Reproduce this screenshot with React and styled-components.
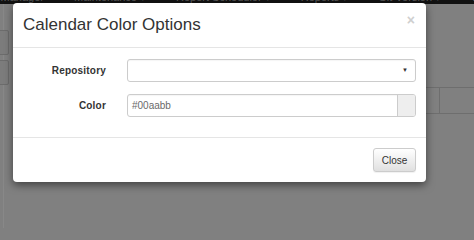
import React from 'react'
import styled, { createGlobalStyle } from 'styled-components'

const GlobalStyle = createGlobalStyle`
    html, body {
        margin: 0;
        padding: 0;
        background: #808080;
        font-family: "Liberation Sans", Arial, sans-serif;
    }
`

const Page = styled.div`
    position: relative;
    width: 474px;
    height: 228px;
    overflow: hidden;
    background: #808080;
`

const Navbar = styled.div`
    height: 4px;
    overflow: hidden;
    background: #121212;
    display: flex;
    gap: 30px;
`

const NavItem = styled.span`
    flex: none;
    margin-top: -9px;
    margin-left: ${(p) => p.offset || 0}px;
    font-size: 11px;
    line-height: 12px;
    color: #5a5a5a;
    white-space: nowrap;
`

const Backdrop = styled.div`
    display: flex;
    justify-content: space-between;
    border-left: 1px solid #888;
    margin-left: 3px;
    height: 224px;
`

const SideButtons = styled.div`
    display: flex;
    flex-direction: column;
    gap: 5px;
    margin-left: -20px;
    padding-top: 26px;
`

const GhostButton = styled.div`
    width: 23px;
    height: 23px;
    border: 1px solid #6c6c6c;
    border-radius: 2px;
    background: #7c7c7c;
`

const GhostTable = styled.div`
    width: 48px;
    margin-top: 83px;
    height: 25px;
    border-top: 1px solid #6e6e6e;
    border-bottom: 1px solid #6e6e6e;
    display: grid;
    grid-template-columns: 14px 1fr;
`

const GhostCell = styled.div`
    border-right: ${(p) => (p.divider ? '1px solid #6e6e6e' : 'none')};
`

const Modal = styled.div`
    position: absolute;
    left: 13px;
    top: 3px;
    width: 413px;
    background: #fff;
    border-radius: 4px;
    box-shadow: 0 3px 9px rgba(0, 0, 0, 0.5);
`

const Header = styled.div`
    display: flex;
    align-items: center;
    justify-content: space-between;
    height: 44px;
    padding: 0 10px;
    border-bottom: 1px solid #e5e5e5;
`

const Title = styled.h4`
    margin: 0;
    font-size: 17px;
    font-weight: normal;
    color: #333;
`

const CloseX = styled.span`
    align-self: flex-start;
    margin-top: 10px;
    margin-right: 1px;
    font-size: 14px;
    font-weight: bold;
    line-height: 14px;
    color: #cfcfcf;
`

const Body = styled.div`
    padding: 11px 10px 10px;
    display: grid;
    grid-template-columns: 83px 1fr;
    column-gap: 21px;
    row-gap: 12px;
    align-items: center;
`

const Label = styled.label`
    text-align: right;
    font-size: 10px;
    font-weight: bold;
    letter-spacing: 0.2px;
    color: #333;
`

const Field = styled.div`
    display: flex;
    align-items: center;
    height: 21px;
    border: 1px solid #ccc;
    border-radius: 3px;
    background: #fff;
    overflow: hidden;
    box-shadow: inset 0 1px 1px rgba(0, 0, 0, 0.04);
`

const FieldText = styled.span`
    flex: 1;
    padding-left: 4px;
    font-size: 10px;
    line-height: 21px;
    color: #6a6a6a;
`

const Caret = styled.span`
    width: 13px;
    font-size: 6px;
    line-height: 21px;
    color: #333;
`

const Addon = styled.span`
    align-self: stretch;
    width: 17px;
    background: #eee;
    border-left: 1px solid #ccc;
`

const Footer = styled.div`
    display: flex;
    justify-content: flex-end;
    margin-top: 10px;
    padding: 10px;
    border-top: 1px solid #e5e5e5;
`

const Button = styled.button`
    width: 43px;
    height: 24px;
    padding: 0;
    font-family: "Liberation Sans", Arial, sans-serif;
    font-size: 10px;
    color: #333;
    border: 1px solid #ccc;
    border-radius: 3px;
    background: linear-gradient(to bottom, #ffffff 0%, #e0e0e0 100%);
    box-shadow: 0 1px 1px rgba(0, 0, 0, 0.06);
`

const navLinks = [
    { label: 'Asset Manager', offset: -30 },
    { label: 'Maintenance ▾', offset: 0 },
    { label: 'Report Scheduler ▾', offset: 0 },
    { label: 'Reports ▾', offset: 0 },
    { label: 'Git Version ▾', offset: 0 },
    { label: 'Work Engine', offset: 0 }
]

const App = () => {
    return (
        <Page>
            <GlobalStyle />
            <Navbar>
                {navLinks.map((link) => (
                    <NavItem key={link.label} offset={link.offset}>
                        {link.label}
                    </NavItem>
                ))}
            </Navbar>
            <Backdrop>
                <SideButtons>
                    <GhostButton />
                    <GhostButton />
                </SideButtons>
                <GhostTable>
                    <GhostCell divider />
                    <GhostCell />
                </GhostTable>
            </Backdrop>

            <Modal>
                <Header>
                    <Title>Calendar Color Options</Title>
                    <CloseX>×</CloseX>
                </Header>
                <Body>
                    <Label>Repository</Label>
                    <Field>
                        <FieldText />
                        <Caret>▼</Caret>
                    </Field>
                    <Label>Color</Label>
                    <Field>
                        <FieldText>#00aabb</FieldText>
                        <Addon />
                    </Field>
                </Body>
                <Footer>
                    <Button>Close</Button>
                </Footer>
            </Modal>
        </Page>
    )
}

export default App
